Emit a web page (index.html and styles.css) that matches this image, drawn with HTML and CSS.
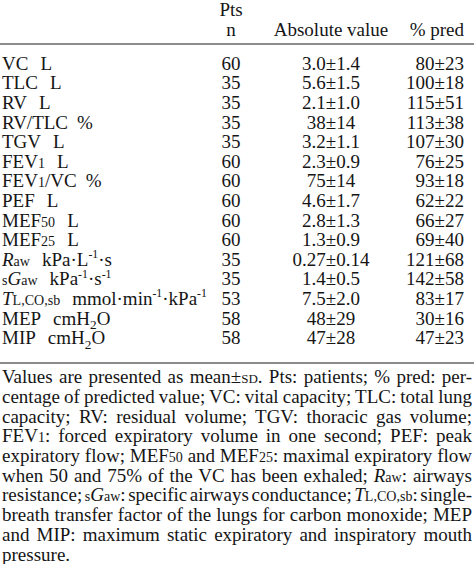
FILE: index.html
```html
<!DOCTYPE html>
<html>
<head>
<meta charset="utf-8">
<link rel="stylesheet" href="styles.css">
</head>
<body>
<div class="page">
<table class="data">
  <colgroup>
    <col class="c-name"><col class="c-n"><col class="c-abs"><col class="c-pred">
  </colgroup>
  <thead>
    <tr><th></th><th class="ctr">Pts</th><th></th><th></th></tr>
    <tr class="hlast"><th></th><th class="ctr">n</th><th class="ctr">Absolute value</th><th class="rgt">% pred</th></tr>
  </thead>
  <tbody>
    <tr class="first"><td>VC<span class="u">L</span></td><td class="ctr">60</td><td class="ctr">3.0±1.4</td><td class="rgt">80±23</td></tr>
    <tr><td>TLC<span class="u">L</span></td><td class="ctr">35</td><td class="ctr">5.6±1.5</td><td class="rgt">100±18</td></tr>
    <tr><td>RV<span class="u">L</span></td><td class="ctr">35</td><td class="ctr">2.1±1.0</td><td class="rgt">115±51</td></tr>
    <tr><td>RV/TLC<span class="u us">%</span></td><td class="ctr">35</td><td class="ctr">38±14</td><td class="rgt">113±38</td></tr>
    <tr><td>TGV<span class="u">L</span></td><td class="ctr">35</td><td class="ctr">3.2±1.1</td><td class="rgt">107±30</td></tr>
    <tr><td>FEV<span class="sm">1</span><span class="u">L</span></td><td class="ctr">60</td><td class="ctr">2.3±0.9</td><td class="rgt">76±25</td></tr>
    <tr><td>FEV<span class="sm">1</span>/VC<span class="u us">%</span></td><td class="ctr">60</td><td class="ctr">75±14</td><td class="rgt">93±18</td></tr>
    <tr><td>PEF<span class="u">L</span></td><td class="ctr">60</td><td class="ctr">4.6±1.7</td><td class="rgt">62±22</td></tr>
    <tr><td>MEF<span class="sm">50</span><span class="u">L</span></td><td class="ctr">60</td><td class="ctr">2.8±1.3</td><td class="rgt">66±27</td></tr>
    <tr><td>MEF<span class="sm">25</span><span class="u">L</span></td><td class="ctr">60</td><td class="ctr">1.3±0.9</td><td class="rgt">69±40</td></tr>
    <tr><td><i>R</i><span class="sm">aw</span><span class="u">kPa·L<sup>-1</sup>·s</span></td><td class="ctr">35</td><td class="ctr">0.27±0.14</td><td class="rgt">121±68</td></tr>
    <tr><td><span class="sm">s</span><i>G</i><span class="sm">aw</span><span class="u">kPa<sup>-1</sup>·s<sup>-1</sup></span></td><td class="ctr">35</td><td class="ctr">1.4±0.5</td><td class="rgt">142±58</td></tr>
    <tr><td><i>T</i><span class="sm">L,CO,sb</span><span class="u">mmol·min<sup>-1</sup>·kPa<sup>-1</sup></span></td><td class="ctr">53</td><td class="ctr">7.5±2.0</td><td class="rgt">83±17</td></tr>
    <tr><td>MEP<span class="u">cmH<sub>2</sub>O</span></td><td class="ctr">58</td><td class="ctr">48±29</td><td class="rgt">30±16</td></tr>
    <tr class="last"><td>MIP<span class="u">cmH<sub>2</sub>O</span></td><td class="ctr">58</td><td class="ctr">47±28</td><td class="rgt">47±23</td></tr>
  </tbody>
</table>
<div class="notes">
  <span class="ln">Values are presented as mean±<span class="sc">sd</span>. Pts: patients; % pred: per-</span>
  <span class="ln">centage of predicted value; VC: vital capacity; TLC: total lung</span>
  <span class="ln">capacity; RV: residual volume; TGV: thoracic gas volume;</span>
  <span class="ln">FEV<span class="sm">1</span>: forced expiratory volume in one second; PEF: peak</span>
  <span class="ln">expiratory flow; MEF<span class="sm">50</span> and MEF<span class="sm">25</span>: maximal expiratory flow</span>
  <span class="ln">when 50 and 75% of the VC has been exhaled; <i>R</i><span class="sm">aw</span>: airways</span>
  <span class="ln">resistance; <span class="sm">s</span><i>G</i><span class="sm">aw</span>: specific airways conductance; <i>T</i><span class="sm">L,CO,sb</span>: single-</span>
  <span class="ln">breath transfer factor of the lungs for carbon monoxide; MEP</span>
  <span class="ln">and MIP: maximum static expiratory and inspiratory mouth</span>
  <span class="ln end">pressure.</span>
</div>
</div>
</body>
</html>
```

FILE: styles.css
```css
html, body {
  margin: 0;
  padding: 0;
  background: #ffffff;
}

.page {
  width: 474px;
  font-family: "Liberation Serif", "Times New Roman", serif;
  font-size: 19px;
  color: #151515;
}

.data {
  width: 474px;
  border-collapse: collapse;
  table-layout: fixed;
}

.c-name { width: 205px; }
.c-n { width: 52px; }
.c-abs { width: 148px; }
.c-pred { width: 69px; }

.data th,
.data td {
  padding: 0;
  height: 19.6px;
  line-height: 19.6px;
  font-weight: normal;
  text-align: left;
  white-space: nowrap;
  vertical-align: top;
}

.data td:first-child { padding-left: 2px; }
.data td:last-child,
.data th:last-child { padding-right: 10px; }

.data .ctr { text-align: center; }
.data .rgt { text-align: right; }

.hlast th {
  padding-bottom: 4px;
  border-bottom: 2px solid #8c8c8c;
}

.first td { padding-top: 8.6px; }
.last td { padding-bottom: 14.5px; }

.u { margin-left: 12px; }
.u.us { margin-left: 9px; }

.sm {
  font-size: 0.74em;
  line-height: 0;
}

sup, sub {
  font-size: 0.62em;
  line-height: 0;
  position: relative;
  vertical-align: baseline;
}
sup { top: -0.65em; }
sub { top: 0.35em; font-size: 0.7em; }

.sc {
  font-variant: small-caps;
}

.notes {
  border-top: 2px solid #8c8c8c;
  padding: 3px 2px 0 2px;
  line-height: 19.7px;
  word-spacing: -2.6px;
}

.ln {
  display: block;
  text-align: justify;
  text-align-last: justify;
  white-space: nowrap;
}
.ln.end { text-align-last: left; }
```
